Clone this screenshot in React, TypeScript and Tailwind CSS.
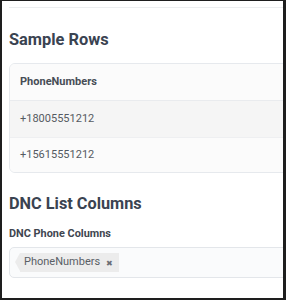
export default function App() {
  const rows = ['+18005551212', '+15615551212'];

  return (
    <div
      className="w-[286px] h-[300px] overflow-hidden bg-white border-l-2 border-t border-r-[3px] border-b-2 border-[#1e1e1e]"
      style={{ fontFamily: 'Roboto, "Liberation Sans", sans-serif' }}
    >
      <div className="pl-[7px] w-[420px]">
        <div className="h-[7px] border-b border-[#eceef0]" />

        <h2 className="mt-[21px] text-[16.4px] leading-[22px] font-bold text-[#3a4351]">Sample Rows</h2>

        <div className="mt-[12px] rounded-[6px] border border-[#e6e9ed] overflow-hidden">
          <div className="h-[37px] flex items-center px-[10px] bg-[#fbfbfb] border-b border-[#e9ebee] text-[11px] font-bold text-[#474d56]">
            PhoneNumbers
          </div>
          {rows.map((r, i) => (
            <div
              key={r}
              className={
                'flex items-center px-[10px] text-[11px] text-[#555a61] ' +
                (i === 0 ? 'h-[37px] pt-[1px] bg-[#f5f5f5] border-b border-[#eeeff1]' : 'h-[34px] bg-[#fbfbfb]')
              }
            >
              {r}
            </div>
          ))}
        </div>

        <h2 className="mt-[20px] text-[16.3px] leading-[22px] font-bold text-[#3a4351]">DNC List Columns</h2>

        <div className="mt-[12px] text-[10.9px] leading-[14px] font-bold text-[#3f4650]">DNC Phone Columns</div>

        <div className="mt-[6px] h-[31px] rounded-[5px] border border-[#e3e6ea] bg-[#fafbfc] flex items-center pl-[5px]">
          <div className="relative ml-[5px] h-[19px] flex items-center bg-[#ececec] pl-[4px] pr-[6px] text-[11px] text-[#5a5f66]">
            <span className="absolute left-[-5px] top-0 w-0 h-0 border-y-[9.5px] border-y-transparent border-r-[5px] border-r-[#ececec]" />
            <span>PhoneNumbers</span>
            <span className="ml-[6px] mt-[2px] text-[8px] text-[#6a6e74] leading-none">✖</span>
          </div>
        </div>
      </div>
    </div>
  );
}
